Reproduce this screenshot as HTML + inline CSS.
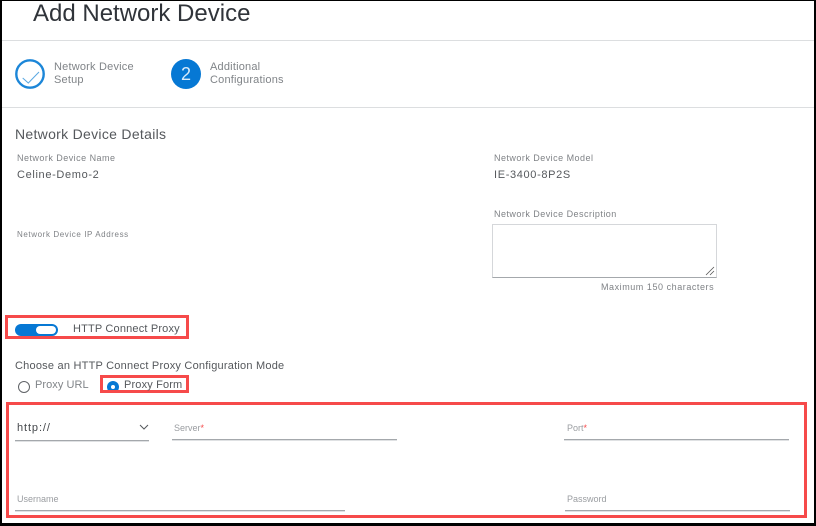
<!DOCTYPE html>
<html><head><meta charset="utf-8">
<style>
html,body{margin:0;padding:0;background:#fff}
#p{position:relative;width:816px;height:526px;overflow:hidden;background:#fff;font-family:"Liberation Sans",sans-serif;color:#58585b;filter:blur(.3px)}
#p div,#p svg{position:absolute}
.t{white-space:nowrap;line-height:1}
.l{font-size:9px;color:#7f8286;letter-spacing:.47px}
.v{font-size:11px;color:#55585c;letter-spacing:.65px}
.n{font-size:11px;color:#808488;letter-spacing:.2px}
.h{background:#dcdee0;height:1px}
.u{background:#a4a8ac;height:1px;border-bottom:1px solid #dfe1e3}
.r{border:3px solid #f64a4a;box-sizing:border-box}
.s{color:#f64a4a}
.f{font-size:9px;color:#9a9da1;letter-spacing:0}
</style></head><body>
<div id="p">
<div class="t" style="left:33px;top:2px;font-size:24px;color:#30343a;letter-spacing:0">Add Network Device</div>
<div class="h" style="left:2px;top:40px;width:812px"></div>
<svg style="left:14px;top:59px" width="32" height="32" viewBox="0 0 32 32"><circle cx="16" cy="15" r="13.7" fill="none" stroke="#1c86d8" stroke-width="2.4"/><path d="M8.7 19l5.6 5L25 13" fill="none" stroke="#5aa8e2" stroke-width="1"/></svg>
<div class="t n" style="left:54px;top:62px">Network Device</div>
<div class="t n" style="left:54px;top:75px">Setup</div>
<div style="left:171px;top:59px;width:30px;height:30px;border-radius:50%;background:#0678d4"></div>
<div class="t" style="left:181px;top:65px;font-size:18px;color:#d8ebfa">2</div>
<div class="t n" style="left:210px;top:62px">Additional</div>
<div class="t n" style="left:210px;top:75px">Configurations</div>
<div class="h" style="left:2px;top:107px;width:812px"></div>
<div class="t" style="left:15px;top:127px;font-size:14px;color:#55585c;letter-spacing:.3px">Network Device Details</div>
<div class="t l" style="left:17px;top:154px">Network Device Name</div>
<div class="t v" style="left:17px;top:170px">Celine-Demo-2</div>
<div class="t l" style="left:494px;top:154px">Network Device Model</div>
<div class="t v" style="left:494px;top:170px">IE-3400-8P2S</div>
<div class="t l" style="left:494px;top:210px">Network Device Description</div>
<div class="t l" style="left:17px;top:231px;font-size:8px;letter-spacing:.6px">Network Device IP Address</div>
<div style="left:492px;top:224px;width:223px;height:52px;border:1px solid #d5d7da;border-bottom:1px solid #a4a8ac"></div>
<svg style="left:705px;top:266px" width="10" height="10" viewBox="0 0 10 10"><path d="M1 9L9 1M5 9L9 5" stroke="#555" stroke-width=".8"/></svg>
<div class="t l" style="left:601px;top:283px;letter-spacing:.55px">Maximum 150 characters</div>
<div class="r" style="left:5px;top:315px;width:184px;height:24px"></div>
<div style="left:15px;top:324px;width:43px;height:12px;border-radius:6px;background:#0678d4"></div>
<div style="left:36px;top:326px;width:20px;height:8px;border-radius:4px;background:#fff"></div>
<div class="t" style="left:73px;top:324px;font-size:11px;color:#55585c;letter-spacing:.17px">HTTP Connect Proxy</div>
<div class="t" style="left:15px;top:361px;font-size:11px;color:#55585c;letter-spacing:.22px">Choose an HTTP Connect Proxy Configuration Mode</div>
<div style="left:18px;top:381px;width:10px;height:10px;border:1px solid #606367;border-radius:50%"></div>
<div class="t n" style="left:35px;top:380px;letter-spacing:.05px">Proxy URL</div>
<div class="r" style="left:100px;top:375px;width:89px;height:18px"></div>
<div style="left:107px;top:381px;width:12px;height:12px;border-radius:50%;background:#0678d4"></div>
<div style="left:111px;top:385px;width:4px;height:4px;border-radius:50%;background:#fff"></div>
<div style="left:100px;top:390px;width:89px;height:3px;background:#f64a4a"></div>
<div class="t" style="left:124px;top:380px;font-size:11px;color:#55585c;letter-spacing:.15px">Proxy Form</div>
<div class="r" style="left:6px;top:402px;width:801px;height:116px"></div>
<div class="t" style="left:17px;top:423px;font-size:11px;color:#44474b;letter-spacing:.9px">http://</div>
<svg style="left:139px;top:424px" width="10" height="7" viewBox="0 0 10 7"><path d="M1 1l4 4 4-4" fill="none" stroke="#55585c" stroke-width="1"/></svg>
<div class="u" style="left:15px;top:440px;width:134px"></div>
<div class="t f" style="left:174px;top:424px">Server<span class="s">*</span></div>
<div class="u" style="left:172px;top:439px;width:225px"></div>
<div class="t f" style="left:567px;top:424px">Port<span class="s">*</span></div>
<div class="u" style="left:564px;top:439px;width:225px"></div>
<div class="t f" style="left:17px;top:495px">Username</div>
<div class="u" style="left:15px;top:510px;width:330px"></div>
<div class="t f" style="left:567px;top:495px">Password</div>
<div class="u" style="left:565px;top:510px;width:225px"></div>
<div style="left:0;top:0;width:2px;height:526px;background:#000"></div>
<div style="left:814px;top:0;width:2px;height:526px;background:#000"></div>
<div style="left:0;top:0;width:816px;height:1px;background:#000"></div>
<div style="left:0;top:523px;width:816px;height:3px;background:#000"></div>
</div>
</body></html>
